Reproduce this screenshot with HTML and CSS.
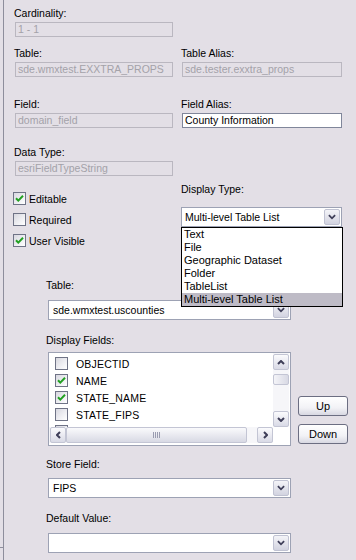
FILE: index.html
```html
<!DOCTYPE html>
<html>
<head>
<meta charset="utf-8">
<link rel="stylesheet" href="styles.css">
</head>
<body>
<div class="screen">
  <div class="panel">
    <div class="top">
      <div class="cell">
        <div class="label">Cardinality:</div>
        <div class="box">1 - 1</div>
      </div>
      <div class="cell"></div>

      <div class="cell r2">
        <div class="label">Table:</div>
        <div class="box">sde.wmxtest.EXXTRA_PROPS</div>
      </div>
      <div class="cell r2">
        <div class="label">Table Alias:</div>
        <div class="box">sde.tester.exxtra_props</div>
      </div>

      <div class="cell r3">
        <div class="label">Field:</div>
        <div class="box">domain_field</div>
      </div>
      <div class="cell r3">
        <div class="label">Field Alias:</div>
        <div class="box white">County Information</div>
      </div>

      <div class="cell r4">
        <div class="label">Data Type:</div>
        <div class="box">esriFieldTypeString</div>
        <div class="checks">
          <div class="check"><span class="cb on"><svg viewBox="0 0 11 11"><path d="M2 5.2 L4.3 7.6 L9 2.8" /></svg></span>Editable</div>
          <div class="check"><span class="cb"></span>Required</div>
          <div class="check"><span class="cb on"><svg viewBox="0 0 11 11"><path d="M2 5.2 L4.3 7.6 L9 2.8" /></svg></span>User Visible</div>
        </div>
      </div>
      <div class="cell r4 dt">
        <div class="label">Display Type:</div>
        <div class="combo dtcombo">
          <span class="ctext">Multi-level Table List</span>
          <span class="dbtn"><svg viewBox="0 0 9 6"><path d="M1 1 L4.5 4.5 L8 1" /></svg></span>
        </div>
      </div>
    </div>

    <div class="lower">
      <div class="label">Table:</div>
      <div class="combo lcombo c1">
        <span class="ctext">sde.wmxtest.uscounties</span>
        <span class="dbtn"><svg viewBox="0 0 9 6"><path d="M1 1 L4.5 4.5 L8 1" /></svg></span>
      </div>

      <div class="label l2">Display Fields:</div>
      <div class="fieldsrow">
        <div class="listview">
          <div class="rows">
            <div class="row"><span class="cb"></span>OBJECTID</div>
            <div class="row"><span class="cb on"><svg viewBox="0 0 11 11"><path d="M2 5.2 L4.3 7.6 L9 2.8" /></svg></span>NAME</div>
            <div class="row"><span class="cb on"><svg viewBox="0 0 11 11"><path d="M2 5.2 L4.3 7.6 L9 2.8" /></svg></span>STATE_NAME</div>
            <div class="row"><span class="cb"></span>STATE_FIPS</div>
            <div class="row"><span class="cb"></span></div>
          </div>
          <div class="vscroll">
            <span class="sbtn"><svg viewBox="0 0 8 5"><path d="M1 4 L4 1 L7 4" /></svg></span>
            <span class="vthumb"></span>
            <span class="vtrack"></span>
            <span class="sbtn"><svg viewBox="0 0 8 5"><path d="M1 1 L4 4 L7 1" /></svg></span>
          </div>
          <div class="hscroll">
            <span class="sbtn"><svg viewBox="0 0 5 8"><path d="M4 1 L1 4 L4 7" /></svg></span>
            <span class="hthumb"><i></i><i></i><i></i><i></i></span>
            <span class="htrack"></span>
            <span class="sbtn"><svg viewBox="0 0 5 8"><path d="M1 1 L4 4 L1 7" /></svg></span>
          </div>
          <div class="corner"></div>
        </div>
        <div class="btns">
          <div class="xbtn">Up</div>
          <div class="xbtn">Down</div>
        </div>
      </div>

      <div class="label l3">Store Field:</div>
      <div class="combo lcombo c3">
        <span class="ctext">FIPS</span>
        <span class="dbtn"><svg viewBox="0 0 9 6"><path d="M1 1 L4.5 4.5 L8 1" /></svg></span>
      </div>

      <div class="label l4">Default Value:</div>
      <div class="combo lcombo c4">
        <span class="ctext"></span>
        <span class="dbtn"><svg viewBox="0 0 9 6"><path d="M1 1 L4.5 4.5 L8 1" /></svg></span>
      </div>
    </div>
  </div>
  <div class="foot"></div>

  <ul class="droplist">
    <li>Text</li>
    <li>File</li>
    <li>Geographic Dataset</li>
    <li>Folder</li>
    <li>TableList</li>
    <li class="sel">Multi-level Table List</li>
  </ul>
</div>
</body>
</html>
```

FILE: styles.css
```css
html, body {
  margin: 0;
  padding: 0;
}
body {
  background: #e3dfe6;
  font-family: "Liberation Sans", Arial, sans-serif;
  font-size: 10.5px;
  color: #000;
}
.screen {
  position: relative;
  width: 356px;
  height: 560px;
  overflow: hidden;
}
.panel {
  margin-left: 3px;
  height: 547px;
  border-left: 1px solid #8e8e9c;
}
.foot {
  width: 3px;
  height: 12px;
  border-top: 1px solid #8e8e9c;
  border-right: 1px solid #8e8e9c;
}

.label {
  height: 13px;
  line-height: 13px;
  white-space: nowrap;
}

/* top section */
.top {
  display: grid;
  grid-template-columns: 158px 160px;
  column-gap: 9px;
  margin-left: 11px;
  padding-top: 7px;
}
.top .cell > .label {
  margin-left: -1px;
}
.r2 { margin-top: 10px; }
.r3 { margin-top: 21px; }
.r4 { margin-top: 18px; }
.dt { padding-top: 37px; }

.box {
  margin-top: 2px;
  height: 15px;
  box-sizing: border-box;
  border: 1px solid #bab7c0;
  line-height: 13px;
  padding-left: 2px;
  color: #a4a2a9;
  white-space: nowrap;
  overflow: hidden;
}
.box.white {
  background: #fff;
  border-color: #80869a;
  color: #000;
}

.checks {
  margin-top: 12px;
  margin-left: -2px;
}
.check {
  height: 21px;
  display: flex;
  align-items: center;
  gap: 3px;
}

.cb {
  width: 13px;
  height: 13px;
  box-sizing: border-box;
  border: 1px solid #6f7386;
  background: linear-gradient(135deg, #d8d8e0 0%, #eeeef2 55%, #ffffff 100%);
  display: inline-flex;
  align-items: center;
  justify-content: center;
  flex: none;
}
.cb svg {
  width: 11px;
  height: 11px;
}
.cb svg path {
  fill: none;
  stroke: #22a022;
  stroke-width: 2;
}

/* combos */
.combo {
  height: 20px;
  box-sizing: border-box;
  border: 1px solid #9da2b4;
  background: #fff;
  display: flex;
  align-items: center;
  padding-left: 3px;
  white-space: nowrap;
}
.ctext {
  flex: 1;
  overflow: hidden;
}
.dbtn {
  width: 16px;
  height: 16px;
  margin-right: 1px;
  box-sizing: border-box;
  border: 1px solid #c0c2d2;
  border-radius: 2px;
  background: linear-gradient(#f4f4f8, #d2d3e0);
  display: flex;
  align-items: center;
  justify-content: center;
  flex: none;
}
.dbtn svg {
  width: 8px;
  height: 6px;
}
.dbtn svg path, .sbtn svg path {
  fill: none;
  stroke: #3e3e58;
  stroke-width: 2;
}
.dtcombo {
  margin-top: 11px;
  margin-left: -1px;
  width: 161px;
  padding-left: 3px;
}

/* lower section */
.lower {
  margin-left: 42px;
  margin-top: 28px;
}
.lcombo {
  margin-left: 2px;
  width: 243px;
  padding-left: 4px;
}
.c1 { margin-top: 8px; }
.l2 { margin-top: 14px; }
.l3 { margin-top: 12px; }
.c3 { margin-top: 7px; }
.l4 { margin-top: 14px; }
.c4 { margin-top: 8px; }

.fieldsrow {
  display: flex;
  margin-top: 5px;
  margin-left: 2px;
}
.listview {
  width: 243px;
  height: 94px;
  box-sizing: border-box;
  border: 1px solid #9da2b4;
  background: #fff;
  display: grid;
  grid-template-columns: 224px 16px;
  grid-template-rows: 74px 16px;
}
.rows {
  padding-top: 2px;
  padding-left: 6px;
  overflow: hidden;
}
.row {
  height: 17px;
  display: flex;
  align-items: center;
  gap: 8px;
  white-space: nowrap;
  letter-spacing: 0.2px;
}
.sbtn {
  width: 16px;
  height: 16px;
  box-sizing: border-box;
  border: 1px solid #c3c5d4;
  border-radius: 2px;
  background: linear-gradient(#fbfbfd, #d9dae6);
  display: flex;
  align-items: center;
  justify-content: center;
  flex: none;
}
.vscroll {
  display: flex;
  flex-direction: column;
  background: #f6f6f9;
}
.vscroll .sbtn:first-child { margin-top: 1px; }
.vscroll svg { width: 8px; height: 5px; }
.hscroll svg { width: 5px; height: 8px; }
.vthumb {
  margin-top: 4px;
  height: 11px;
  box-sizing: border-box;
  border: 1px solid #c3c5d4;
  border-radius: 2px;
  background: linear-gradient(90deg, #f4f4f8, #d8d9e4);
}
.vtrack { flex: 1; }
.hscroll {
  display: flex;
  background: #f6f6f9;
  padding-left: 1px;
}
.hthumb {
  width: 181px;
  box-sizing: border-box;
  border: 1px solid #c3c5d4;
  border-radius: 2px;
  background: linear-gradient(#fafafc, #d8d9e4);
  display: flex;
  align-items: center;
  justify-content: center;
  gap: 1px;
}
.hthumb i {
  width: 1px;
  height: 6px;
  background: #9a9cb0;
}
.htrack { flex: 1; }
.corner { background: #fff; }

.btns {
  display: flex;
  flex-direction: column;
  justify-content: flex-end;
  gap: 8px;
  margin-left: 7px;
  padding-bottom: 2px;
}
.xbtn {
  width: 50px;
  height: 20px;
  box-sizing: border-box;
  border: 1px solid #6c6e82;
  border-radius: 3px;
  background: linear-gradient(#ffffff 0%, #f2f2f6 60%, #d8d8e2 100%);
  display: flex;
  align-items: center;
  justify-content: center;
  font-size: 11px;
}

/* open dropdown list (overlay) */
.droplist {
  position: absolute;
  left: 181px;
  top: 227px;
  width: 162px;
  margin: 0;
  padding: 0;
  list-style: none;
  box-sizing: border-box;
  border: 1px solid #000;
  background: #fff;
  font-size: 11px;
}
.droplist li {
  height: 13px;
  line-height: 13px;
  padding-left: 2px;
  white-space: nowrap;
}
.droplist li.sel {
  background: #bebbc6;
}
```
